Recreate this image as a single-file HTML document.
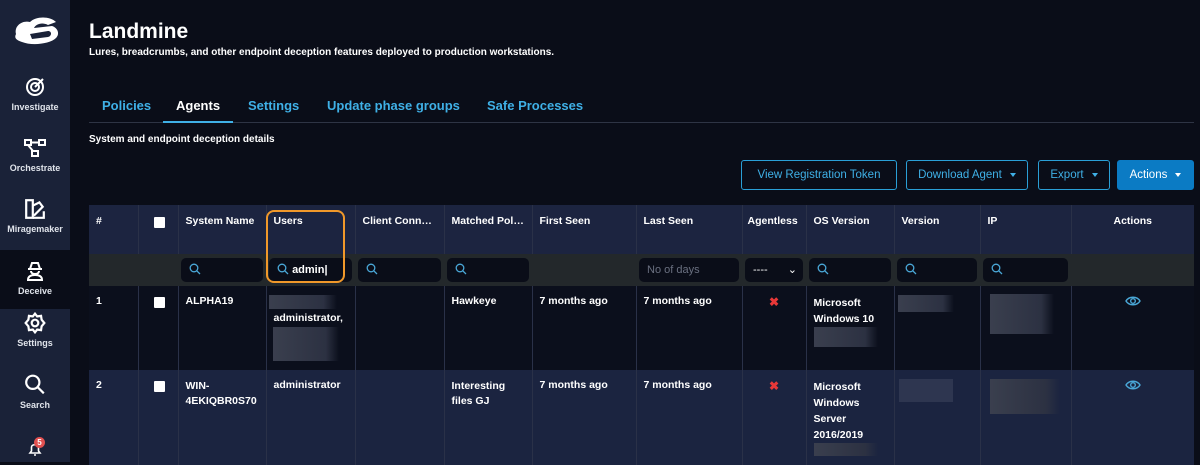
<!DOCTYPE html>
<html><head><style>
*{box-sizing:border-box;margin:0;padding:0}
body{width:1200px;height:462px;overflow:hidden;background:#0a0d18;font-family:"Liberation Sans",sans-serif;color:#fff;position:relative}
.sb{position:absolute;left:0;top:0;width:70px;height:462px;background:#1a2238}
.nav{position:absolute;left:0;width:70px;text-align:center;font-size:9px;font-weight:bold;color:#dfe3ea}
.nav svg{display:block;margin:0 auto 4px}
.abs{position:absolute}
.tab{position:absolute;top:98px;font-size:13px;font-weight:bold;color:#3fb0e6}
.btn{position:absolute;top:160px;height:30px;border:1px solid #2a9fd6;border-radius:3px;color:#3fb0e6;font-size:11.5px;line-height:28px;text-align:center}
.car{display:inline-block;border-left:3.5px solid transparent;border-right:3.5px solid transparent;border-top:4px solid currentColor;vertical-align:middle;margin-left:8px}
table{position:absolute;left:89px;top:205px;width:1105px;border-collapse:collapse;font-size:10.5px;font-weight:bold;table-layout:fixed}
td{border-right:1px solid #2a3148;vertical-align:top;padding:9px 7px}
td:last-child{border-right:none}
.h td{background:#1c2440;height:49px;padding-top:10px;white-space:nowrap;overflow:hidden;text-overflow:ellipsis}
.f td{background:#23282b;height:32px;padding:4px 3px;border-right:none}
.r1 td{background:#0b0f1c;height:83px}
.r2 td{background:#1b2440;height:93px}
.in{height:24px;background:#0a0d18;border-radius:5px;position:relative;font-weight:normal;color:#6a7080;font-size:11px;line-height:24px;padding-left:8px}
.in svg{vertical-align:middle;margin-top:-2px}
.cb{display:inline-block;width:11px;height:11px;background:#fff;border-radius:1px;margin-left:8px;margin-top:2px}
.bl{background:linear-gradient(90deg,#3a3f4e,#2c3142 80%,transparent);display:block}
</style></head><body>
<div class="sb"></div>
<div class="abs" style="left:0;top:250px;width:70px;height:59px;background:#0a0d18"></div>
<svg class="abs" style="left:12px;top:16px" width="50" height="30" viewBox="0 0 50 30"><path d="M4 18C2 10 10 4 18 6C24 0 38 0 44 6L36 9C30 6 24 8 22 12L40 10C46 12 48 18 44 22C38 28 20 30 10 26C4 24 2 22 4 18Z" fill="#fff"/><path d="M18 18L36 15C40 15 40 20 36 21L20 23Z" fill="#1a2238"/></svg>
<div class="nav" style="top:76px"><svg width="20" height="22" viewBox="0 0 20 20" fill="none" stroke="#fff" stroke-width="2"><circle cx="10" cy="10" r="8"/><circle cx="10" cy="10" r="4"/><path d="M10 10L18 2"/></svg>Investigate</div>
<div class="nav" style="top:137px"><svg width="24" height="22" viewBox="0 0 24 20" fill="none" stroke="#fff" stroke-width="2"><rect x="2" y="2" width="6" height="5"/><rect x="16" y="2" width="6" height="5"/><rect x="9" y="13" width="6" height="5"/><path d="M8 4.5H16M5 7L10 13"/></svg>Orchestrate</div>
<div class="nav" style="top:198px"><svg width="22" height="22" viewBox="0 0 20 20" fill="none" stroke="#fff" stroke-width="2"><rect x="2" y="2" width="6" height="16"/><path d="M8 7L14 4L17 8L9 16M8 18H18V12"/></svg>Miragemaker</div>
<div class="nav" style="top:260px"><svg width="20" height="22" viewBox="0 0 20 20" fill="none" stroke="#fff" stroke-width="2"><path d="M5 8L7 2H13L15 8ZM3 8H17M6 10C6 14 14 14 14 10M3 19C3 15 6 14 10 14C14 14 17 15 17 19Z"/></svg>Deceive</div>
<div class="nav" style="top:312px"><svg width="22" height="22" viewBox="0 0 20 20" fill="none" stroke="#fff" stroke-width="2"><circle cx="10" cy="10" r="3"/><path d="M10 1.5L12 4L15.5 3.5L16 7L18.5 10L16 13L15.5 16.5L12 16L10 18.5L8 16L4.5 16.5L4 13L1.5 10L4 7L4.5 3.5L8 4Z"/></svg>Settings</div>
<div class="nav" style="top:373px"><svg width="22" height="23" viewBox="0 0 20 20" fill="none" stroke="#fff" stroke-width="2"><circle cx="8" cy="8" r="6"/><path d="M12.5 12.5L18 18"/></svg>Search</div>
<svg class="abs" style="left:27px;top:441px" width="16" height="16" viewBox="0 0 16 16" fill="none" stroke="#fff" stroke-width="1.6"><path d="M3 12H13L11.5 10V6C11.5 3 4.5 3 4.5 6V10ZM7 14H9"/></svg>
<div class="abs" style="left:34px;top:437px;width:11px;height:11px;border-radius:50%;background:#e05050;font-size:8px;text-align:center;line-height:11px;font-weight:bold">5</div>

<div class="abs" style="left:89px;top:20px;font-size:21px;font-weight:bold">Landmine</div>
<div class="abs" style="left:89px;top:47px;font-size:10px;font-weight:bold">Lures, breadcrumbs, and other endpoint deception features deployed to production workstations.</div>
<div class="tab" style="left:102px">Policies</div>
<div class="tab" style="left:176px;color:#fff">Agents</div>
<div class="tab" style="left:248px">Settings</div>
<div class="tab" style="left:327px">Update phase groups</div>
<div class="tab" style="left:487px">Safe Processes</div>
<div class="abs" style="left:89px;top:122px;width:1105px;height:1px;background:#2e3444"></div>
<div class="abs" style="left:163px;top:121px;width:70px;height:2px;background:#3fb0e6"></div>
<div class="abs" style="left:89px;top:134px;font-size:10px;font-weight:bold">System and endpoint deception details</div>
<div class="btn" style="left:741px;width:156px">View Registration Token</div>
<div class="btn" style="left:906px;width:122px">Download Agent<span class="car"></span></div>
<div class="btn" style="left:1038px;width:72px">Export<span class="car"></span></div>
<div class="btn" style="left:1117px;width:77px;background:#0b7bc4;border-color:#0b7bc4;color:#fff">Actions<span class="car"></span></div>

<svg width="0" height="0" style="position:absolute"><defs><symbol id="s" viewBox="0 0 12 12"><circle cx="5" cy="5" r="3.8" fill="none" stroke="#4aa8d8" stroke-width="1.3"/><path d="M7.8 7.8L11 11" stroke="#4aa8d8" stroke-width="1.3"/></symbol></defs></svg>
<table>
<colgroup><col style="width:49px"><col style="width:40px"><col style="width:88px"><col style="width:89px"><col style="width:89px"><col style="width:88px"><col style="width:104px"><col style="width:106px"><col style="width:64px"><col style="width:88px"><col style="width:86px"><col style="width:91px"><col></colgroup>
<tr class="h"><td>#</td><td><span class="cb"></span></td><td>System Name</td><td>Users</td><td>Client Connection</td><td>Matched Policies</td><td>First Seen</td><td>Last Seen</td><td style="padding-left:5px;padding-right:0;text-overflow:clip">Agentless</td><td>OS Version</td><td>Version</td><td>IP</td><td style="text-align:center">Actions</td></tr>
<tr class="f"><td></td><td></td><td><div class="in"><svg width="12" height="12"><use href="#s"/></svg></div></td><td><div class="in"><svg width="12" height="12"><use href="#s"/></svg> <span style="color:#fff;font-weight:bold">admin|</span></div></td><td><div class="in"><svg width="12" height="12"><use href="#s"/></svg></div></td><td><div class="in"><svg width="12" height="12"><use href="#s"/></svg></div></td><td></td><td><div class="in">No of days</div></td><td><div class="in" style="color:#fff">---- <span style="float:right;margin-right:6px">&#8964;</span></div></td><td><div class="in"><svg width="12" height="12"><use href="#s"/></svg></div></td><td><div class="in"><svg width="12" height="12"><use href="#s"/></svg></div></td><td><div class="in"><svg width="12" height="12"><use href="#s"/></svg></div></td><td></td></tr>
<tr class="r1"><td>1</td><td><span class="cb"></span></td><td>ALPHA19</td><td style="padding:9px 2px"><span class="bl" style="width:68px;height:14px"></span><div style="padding:3px 5px">administrator,</div><span class="bl" style="width:66px;height:34px;margin-left:4px"></span></td><td></td><td>Hawkeye</td><td>7 months ago</td><td>7 months ago</td><td style="color:#e83838;text-align:center;font-size:12px">✖</td><td style="line-height:16px">Microsoft<br>Windows 10<span class="bl" style="width:64px;height:20px"></span></td><td style="padding:9px 3px"><span class="bl" style="width:56px;height:17px"></span></td><td style="padding:8px 9px"><span class="bl" style="width:64px;height:40px"></span></td><td style="text-align:center"><svg width="16" height="12" viewBox="0 0 16 12" fill="none" stroke="#4aa8d8" stroke-width="1.4"><path d="M1 6C4 1 12 1 15 6C12 11 4 11 1 6Z"/><circle cx="8" cy="6" r="2.3"/></svg></td></tr>
<tr class="r2"><td>2</td><td><span class="cb"></span></td><td style="line-height:15px">WIN-<br>4EKIQBR0S70</td><td>administrator</td><td></td><td style="line-height:15px">Interesting<br>files GJ</td><td>7 months ago</td><td>7 months ago</td><td style="color:#e83838;text-align:center;font-size:12px">✖</td><td style="line-height:16px">Microsoft<br>Windows<br>Server<br>2016/2019<span class="bl" style="width:64px;height:13px"></span></td><td style="padding:9px 4px"><span class="bl" style="width:54px;height:23px;background:#2e3650"></span></td><td style="padding:9px 9px"><span class="bl" style="width:70px;height:35px"></span></td><td style="text-align:center"><svg width="16" height="12" viewBox="0 0 16 12" fill="none" stroke="#4aa8d8" stroke-width="1.4"><path d="M1 6C4 1 12 1 15 6C12 11 4 11 1 6Z"/><circle cx="8" cy="6" r="2.3"/></svg></td></tr>
</table>
<div class="abs" style="left:266px;top:210px;width:79px;height:73px;border:2px solid #f0982a;border-radius:8px"></div>
</body></html>
